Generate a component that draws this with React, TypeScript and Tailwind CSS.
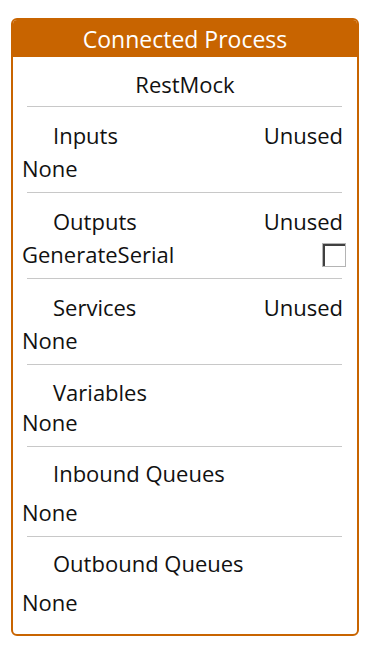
import React from 'react';

type Section = {
  title: string;
  value: string;
  status?: string;
  checkbox?: boolean;
  // spacing per section, matches the reference
  pt: string;
  titleLh: string;
  valueLh: string;
  pb: string;
};

const SECTIONS: Section[] = [
  { title: 'Inputs', value: 'None', status: 'Unused', pt: 'pt-[12px]', titleLh: 'leading-[33px]', valueLh: 'leading-[33px]', pb: 'pb-[7px]' },
  { title: 'Outputs', value: 'GenerateSerial', status: 'Unused', checkbox: true, pt: 'pt-[12px]', titleLh: 'leading-[33px]', valueLh: 'leading-[33px]', pb: 'pb-[7px]' },
  { title: 'Services', value: 'None', status: 'Unused', pt: 'pt-[12px]', titleLh: 'leading-[33px]', valueLh: 'leading-[33px]', pb: 'pb-[7px]' },
  { title: 'Variables', value: 'None', pt: 'pt-[11px]', titleLh: 'leading-[32px]', valueLh: 'leading-[28px]', pb: 'pb-[10px]' },
  { title: 'Inbound Queues', value: 'None', pt: 'pt-[11px]', titleLh: 'leading-[30px]', valueLh: 'leading-[48px]', pb: 'pb-0' },
  { title: 'Outbound Queues', value: 'None', pt: 'pt-[11px]', titleLh: 'leading-[30px]', valueLh: 'leading-[48px]', pb: 'pb-[8px]' },
];

function Checkbox() {
  return (
    <div className="w-[24px] h-[24px] border border-[#b4b4b4] bg-white">
      <div className="w-full h-full border-t-2 border-l-2 border-[#404040]" />
    </div>
  );
}

function Divider() {
  return <div className="h-px bg-[#c8c8c8] ml-[14px] mr-[15px]" />;
}

export default function App() {
  return (
    <div className="w-[372px] h-[650px] bg-white pt-[18px] pl-[11px]" style={{ fontFamily: '"Open Sans", "Noto Sans", sans-serif' }}>
      <div className="w-[348px] border-2 border-[#c86400] rounded-[6px] overflow-hidden text-[22px] text-[#111]">
        {/* Header */}
        <div className="bg-[#c86400] h-[38px] -mt-px text-white text-center text-[23px] leading-[40px]">
          Connected Process
        </div>

        <div className="text-center pt-[12px] pb-[7px] leading-[30px]">RestMock</div>
        <Divider />

        {SECTIONS.map((s, i) => (
          <div key={s.title}>
            <div className={`${s.pt} ${s.pb}`}>
              <div className={`flex justify-between pl-[40px] pr-[14px] ${s.titleLh}`}>
                <span>{s.title}</span>
                {s.status && <span>{s.status}</span>}
              </div>
              <div className={`flex justify-between items-center pl-[9px] pr-[11px] ${s.valueLh}`}>
                <span>{s.value}</span>
                {s.checkbox && <Checkbox />}
              </div>
            </div>
            {i < SECTIONS.length - 1 && <Divider />}
          </div>
        ))}
      </div>
    </div>
  );
}
